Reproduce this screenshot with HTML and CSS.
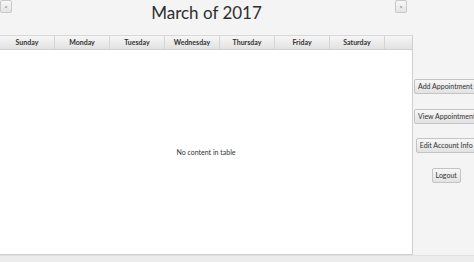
FILE: index.html
```html
<!DOCTYPE html>
<html>
<head>
<meta charset="utf-8">
<link rel="stylesheet" href="styles.css">
</head>
<body>
<div class="app">
  <div class="main">
    <div class="topbar">
      <button class="nav prev">&lt;</button>
      <div class="title">March of 2017</div>
      <button class="nav next">&gt;</button>
    </div>
    <div class="table">
      <div class="thead">
        <div class="th">Sunday</div>
        <div class="th">Monday</div>
        <div class="th">Tuesday</div>
        <div class="th">Wednesday</div>
        <div class="th">Thursday</div>
        <div class="th">Friday</div>
        <div class="th">Saturday</div>
        <div class="th filler"></div>
      </div>
      <div class="tbody">No content in table</div>
    </div>
  </div>
  <div class="side">
    <button class="btn wide">Add Appointment</button>
    <button class="btn wide">View Appointment</button>
    <button class="btn">Edit Account Info</button>
    <button class="btn">Logout</button>
  </div>
</div>
<div class="bottom"></div>
</body>
</html>
```
FILE: styles.css
```css
html, body {
  margin: 0;
  padding: 0;
}
body {
  width: 474px;
  height: 262px;
  overflow: hidden;
  background: #f4f4f4;
  font-family: Lato, "Open Sans", sans-serif;
  color: #333;
}
.app {
  display: flex;
  height: 255px;
}
.main {
  width: 413px;
  display: flex;
  flex-direction: column;
}
.topbar {
  height: 35px;
  display: flex;
  align-items: flex-start;
  position: relative;
}
.nav {
  width: 12px;
  height: 13px;
  padding: 0;
  margin: 0;
  border: 1px solid #c8c8c8;
  border-radius: 2px;
  background: linear-gradient(#f8f8f8, #e4e4e4);
  font-size: 6px;
  line-height: 11px;
  color: #666;
  font-family: Lato, sans-serif;
}
.next { margin-left: auto; margin-right: 6px; }
.title {
  position: absolute;
  left: 0;
  right: 0;
  top: 0;
  text-align: center;
  font-size: 17px;
  line-height: 26px;
  color: #2e2e2e;
  pointer-events: none;
}
.table {
  flex: 1;
  display: flex;
  flex-direction: column;
  background: #fff;
  border-top: 1px solid #d8d8d8;
  border-right: 1px solid #cfcfcf;
  border-bottom: 1px solid #cfcfcf;
}
.thead {
  display: flex;
  height: 13px;
  background: linear-gradient(#f6f6f6, #e2e2e2);
  border-bottom: 1px solid #cfcfcf;
}
.th {
  width: 55px;
  border-right: 1px solid #d4d4d4;
  box-sizing: border-box;
  font-size: 7px;
  font-weight: bold;
  line-height: 13px;
  text-align: center;
  color: #333;
}
.th.filler {
  flex: 1;
  border-right: none;
}
.tbody {
  flex: 1;
  display: flex;
  align-items: center;
  justify-content: center;
  font-size: 7px;
  color: #333;
}
.side {
  flex: 1;
  display: flex;
  flex-direction: column;
  align-items: center;
  padding-top: 79px;
  gap: 14.5px;
}
.btn {
  height: 15px;
  padding: 0 3px;
  margin: 0;
  border: 1px solid #c4c4c4;
  border-radius: 2px;
  background: linear-gradient(#f7f7f7, #e2e2e2);
  font-family: Lato, sans-serif;
  font-size: 7px;
  line-height: 13px;
  color: #333;
  white-space: nowrap;
}
.btn.wide {
  align-self: flex-start;
  margin-left: 1px;
}
.bottom {
  height: 7px;
  background: #ececec;
  border-top: 1px solid #e0e0e0;
}
```
